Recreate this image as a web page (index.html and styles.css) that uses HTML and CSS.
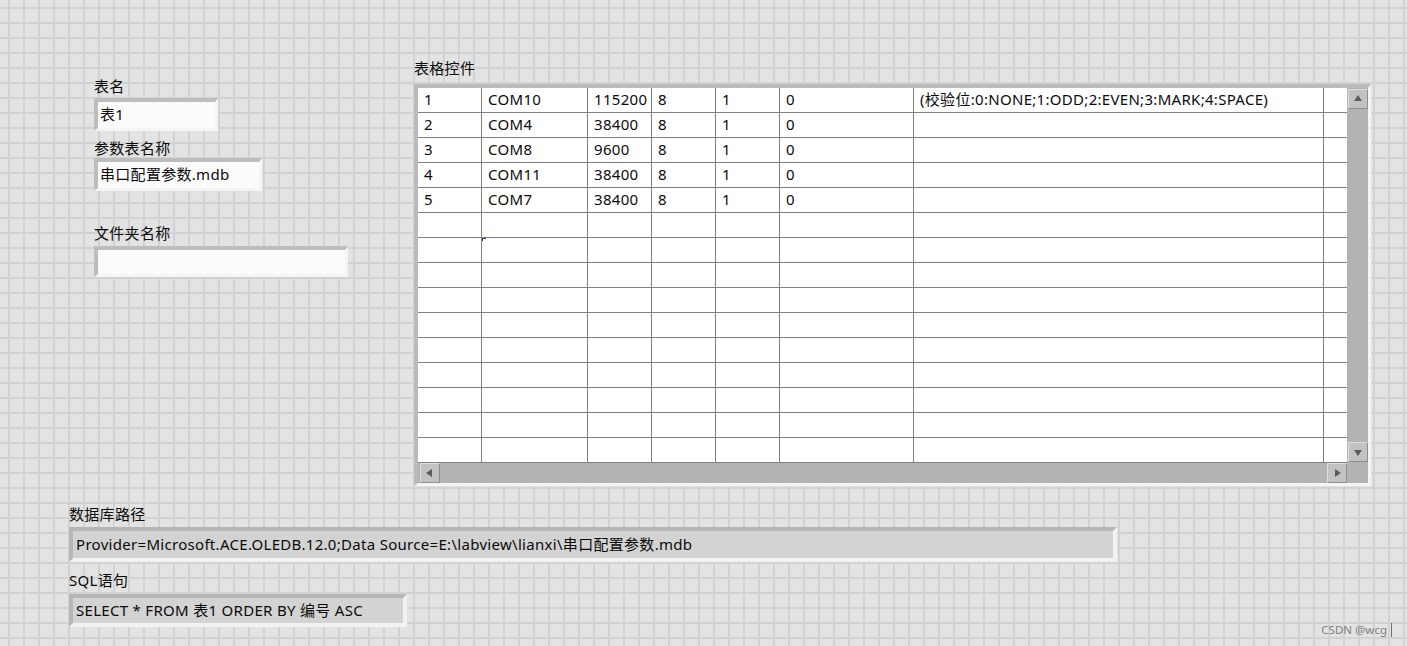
FILE: index.html
```html
<!DOCTYPE html>
<html lang="zh-CN">
<head>
<meta charset="utf-8">
<title>LabVIEW 前面板</title>
<link rel="stylesheet" href="styles.css">
</head>
<body>
<div class="panel">
  <div class="top">
    <div class="left">
      <div class="label">表名</div>
      <div class="ctl ctl-name">表1</div>
      <div class="label label-gap1">参数表名称</div>
      <div class="ctl ctl-param">串口配置参数.mdb</div>
      <div class="label label-gap2">文件夹名称</div>
      <div class="ctl ctl-folder"></div>
    </div>
    <div class="right">
      <div class="label">表格控件</div>
      <div class="tbl">
        <div class="cells">
          <div class="c">1</div><div class="c">COM10</div><div class="c">115200</div><div class="c">8</div><div class="c">1</div><div class="c">0</div><div class="c">(校验位:0:NONE;1:ODD;2:EVEN;3:MARK;4:SPACE)</div><div class="c"></div>
          <div class="c">2</div><div class="c">COM4</div><div class="c">38400</div><div class="c">8</div><div class="c">1</div><div class="c">0</div><div class="c"></div><div class="c"></div>
          <div class="c">3</div><div class="c">COM8</div><div class="c">9600</div><div class="c">8</div><div class="c">1</div><div class="c">0</div><div class="c"></div><div class="c"></div>
          <div class="c">4</div><div class="c">COM11</div><div class="c">38400</div><div class="c">8</div><div class="c">1</div><div class="c">0</div><div class="c"></div><div class="c"></div>
          <div class="c">5</div><div class="c">COM7</div><div class="c">38400</div><div class="c">8</div><div class="c">1</div><div class="c">0</div><div class="c"></div><div class="c"></div>
          <div class="c"></div><div class="c"></div><div class="c"></div><div class="c"></div><div class="c"></div><div class="c"></div><div class="c"></div><div class="c"></div>
          <div class="c"></div><div class="c mark"></div><div class="c"></div><div class="c"></div><div class="c"></div><div class="c"></div><div class="c"></div><div class="c"></div>
          <div class="c"></div><div class="c"></div><div class="c"></div><div class="c"></div><div class="c"></div><div class="c"></div><div class="c"></div><div class="c"></div>
          <div class="c"></div><div class="c"></div><div class="c"></div><div class="c"></div><div class="c"></div><div class="c"></div><div class="c"></div><div class="c"></div>
          <div class="c"></div><div class="c"></div><div class="c"></div><div class="c"></div><div class="c"></div><div class="c"></div><div class="c"></div><div class="c"></div>
          <div class="c"></div><div class="c"></div><div class="c"></div><div class="c"></div><div class="c"></div><div class="c"></div><div class="c"></div><div class="c"></div>
          <div class="c"></div><div class="c"></div><div class="c"></div><div class="c"></div><div class="c"></div><div class="c"></div><div class="c"></div><div class="c"></div>
          <div class="c"></div><div class="c"></div><div class="c"></div><div class="c"></div><div class="c"></div><div class="c"></div><div class="c"></div><div class="c"></div>
          <div class="c"></div><div class="c"></div><div class="c"></div><div class="c"></div><div class="c"></div><div class="c"></div><div class="c"></div><div class="c"></div>
          <div class="c"></div><div class="c"></div><div class="c"></div><div class="c"></div><div class="c"></div><div class="c"></div><div class="c"></div><div class="c"></div>
        </div>
        <div class="vs">
          <div class="btn"><svg width="18" height="18" viewBox="0 0 18 18"><polygon points="5,11 13,11 9,5" fill="#5b5b5b"/></svg></div>
          <div class="btn"><svg width="18" height="18" viewBox="0 0 18 18"><polygon points="5,7 13,7 9,13" fill="#5b5b5b"/></svg></div>
        </div>
        <div class="hs">
          <div class="btn"><svg width="18" height="18" viewBox="0 0 18 18"><polygon points="11,5 11,13 5,9" fill="#5b5b5b"/></svg></div>
          <div class="btn"><svg width="18" height="18" viewBox="0 0 18 18"><polygon points="7,5 7,13 13,9" fill="#5b5b5b"/></svg></div>
        </div>
        <div class="corner"></div>
      </div>
    </div>
  </div>
  <div class="bottom">
    <div class="label">数据库路径</div>
    <div class="ind ind-path">Provider=Microsoft.ACE.OLEDB.12.0;Data Source=E:\labview\lianxi\串口配置参数.mdb</div>
    <div class="label label-gap3">SQL语句</div>
    <div class="ind ind-sql">SELECT * FROM 表1 ORDER BY 编号 ASC</div>
  </div>
  <div class="watermark">CSDN @wcg <span class="bar"></span></div>
</div>
</body>
</html>
```
FILE: styles.css
```css
body {
  margin: 0;
}

.panel {
  position: relative;
  width: 1407px;
  height: 646px;
  overflow: hidden;
  background-color: #e3e3e3;
  background-image:
    linear-gradient(to right, #d2d2d2 2px, transparent 2px),
    linear-gradient(to bottom, #d2d2d2 2px, transparent 2px);
  background-size: 15px 15px;
  background-position: 8px 7px;
  font-family: "Noto Sans", "Noto Sans CJK SC", sans-serif;
  font-size: 15px;
  letter-spacing: 0.3px;
  color: #0a0a0a;
}

.top {
  display: flex;
}

.left {
  margin-left: 94px;
  width: 320px;
  padding-top: 77px;
  display: flex;
  flex-direction: column;
  align-items: flex-start;
}

.label {
  height: 19px;
  line-height: 19px;
  white-space: nowrap;
}

.label-gap1 { margin-top: 8px; }
.label-gap2 { margin-top: 33px; margin-bottom: 3px; }
.left > .label:first-child { margin-bottom: 2px; }

.ctl {
  box-sizing: border-box;
  border-style: solid;
  border-width: 4px 3px 3px 4px;
  border-color: #bdbdbd #f5f5f5 #f5f5f5 #bdbdbd;
  background: #fbfbfb;
  padding-left: 2px;
  white-space: nowrap;
}

.ctl-name { width: 124px; height: 33px; line-height: 25px; }
.ctl-param { width: 168px; height: 33px; line-height: 25px; }
.ctl-folder { width: 254px; height: 31px; }

.right {
  padding-top: 59px;
}

.tbl {
  margin-top: 6px;
  width: 950px;
  height: 395px;
  border-style: solid;
  border-width: 4px 3px 3px 4px;
  border-color: #bababa #f4f4f4 #f4f4f4 #bababa;
  display: grid;
  grid-template-columns: 929px 21px;
  grid-template-rows: 375px 20px;
}

.cells {
  display: grid;
  grid-template-columns: 64px 106px 64px 64px 64px 134px 410px 23px;
  grid-auto-rows: 25px;
  background: #fff;
}

.c {
  box-sizing: border-box;
  border-right: 1px solid #808080;
  border-bottom: 1px solid #808080;
  padding-left: 6px;
  line-height: 22px;
  white-space: nowrap;
  overflow: hidden;
}

.c:nth-child(8n) {
  border-right: none;
}

.mark {
  position: relative;
}

.mark::before {
  content: "";
  position: absolute;
  left: 0;
  top: 0;
  width: 3px;
  height: 2px;
  border-left: 1px solid #2b3b9c;
  border-top: 1px solid #2b3b9c;
}

.vs {
  background: #b3b3b3;
  display: flex;
  flex-direction: column;
  justify-content: space-between;
  padding: 1px 0 1px 1px;
}

.hs {
  background: #b3b3b3;
  display: flex;
  justify-content: space-between;
  padding-left: 2px;
}

.corner {
  background: #b3b3b3;
}

.btn {
  box-sizing: border-box;
  width: 20px;
  height: 20px;
  background: #c2c2c2;
  border: 1px solid;
  border-color: #dedede #8f8f8f #8f8f8f #dedede;
  display: flex;
}

.btn svg {
  display: block;
}

.bottom {
  margin-left: 69px;
  margin-top: 19px;
}

.bottom > .label:first-child { margin-bottom: 3px; }
.label-gap3 { margin-top: 9px; margin-bottom: 4px; }

.ind {
  box-sizing: border-box;
  border-style: solid;
  border-width: 4px;
  border-color: #b6b6b6 #f2f2f2 #f2f2f2 #b6b6b6;
  background: #d3d3d3;
  padding-left: 3px;
  white-space: nowrap;
}

.ind-path { width: 1048px; height: 35px; line-height: 26px; }
.ind-sql { width: 338px; height: 33px; line-height: 24px; }

.watermark {
  position: absolute;
  right: 15px;
  bottom: 9px;
  font-size: 11.5px;
  letter-spacing: 0;
  color: #7e7e7e;
  line-height: 14px;
  display: flex;
  align-items: center;
  gap: 4px;
}

.watermark .bar {
  display: inline-block;
  width: 1px;
  height: 14px;
  background: #6f6f6f;
}
```
